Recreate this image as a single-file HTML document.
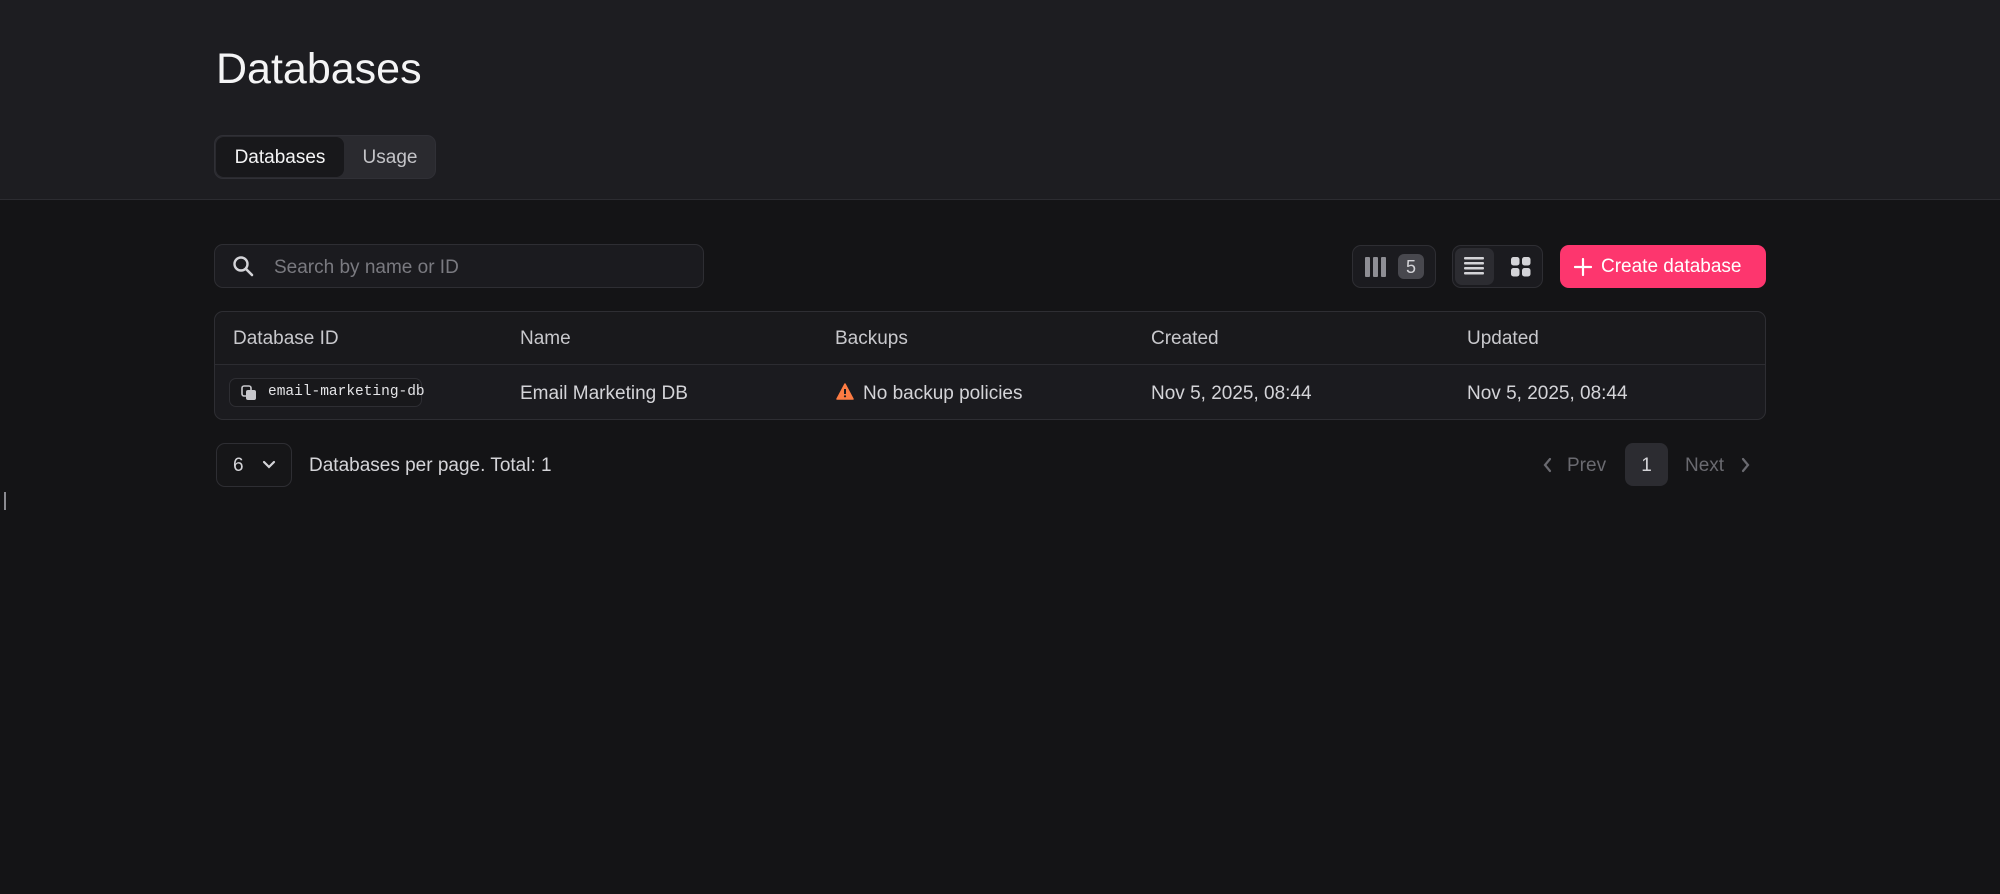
<!DOCTYPE html>
<html><head><style>
*{box-sizing:border-box;margin:0;padding:0}
body{width:2000px;height:894px;background:#141416;font-family:"Liberation Sans",sans-serif;color:#e4e4e7;position:relative;overflow:hidden}
.hdr{position:absolute;left:0;top:0;width:2000px;height:200px;background:#1d1d21;border-bottom:1px solid #2c2c31}
.abs{position:absolute}
h1{position:absolute;left:216px;top:45px;font-size:43px;font-weight:400;color:#f4f4f5;letter-spacing:0}
.tabs{left:214px;top:135px;width:222px;height:44px;background:#2a2a2f;border-radius:9px;border:1px solid #303036}
.tab1{left:1px;top:1px;width:128px;height:40px;background:#18181b;border-radius:8px;color:#f4f4f5;font-size:19px;line-height:42px;text-align:center}
.tab2{left:130px;top:1px;width:90px;height:40px;color:#c4c4c8;font-size:19px;line-height:42px;text-align:center}
.box{border:1px solid #2e2e33;background:#1b1b1f;border-radius:9px}
.txt{font-size:19px;white-space:nowrap}
</style></head><body>
<div class="hdr"></div>
<h1>Databases</h1>
<div class="abs tabs"><div class="abs tab1">Databases</div><div class="abs tab2">Usage</div></div>

<div class="abs box" style="left:214px;top:244px;width:490px;height:44px"></div>
<svg class="abs" style="left:232px;top:255px" width="22" height="22" viewBox="0 0 22 22"><circle cx="9" cy="9" r="6.5" fill="none" stroke="#d4d4d8" stroke-width="2.4"/><path d="M14 14l6 6" stroke="#d4d4d8" stroke-width="2.6" stroke-linecap="round"/></svg>
<div class="abs txt" style="left:274px;top:257px;color:#7a7a80">Search by name or ID</div>

<div class="abs box" style="left:1352px;top:245px;width:84px;height:43px"></div>
<svg class="abs" style="left:1364px;top:257px" width="24" height="20"><rect x="1" y="0" width="5" height="20" rx="1" fill="#8e8e94"/><rect x="9" y="0" width="5" height="20" rx="1" fill="#8e8e94"/><rect x="17" y="0" width="5" height="20" rx="1" fill="#8e8e94"/></svg>
<div class="abs" style="left:1398px;top:254px;width:26px;height:25px;background:#48484e;border-radius:6px;color:#d4d4d8;font-size:18px;text-align:center;line-height:26px">5</div>

<div class="abs box" style="left:1452px;top:245px;width:91px;height:43px"></div>
<div class="abs" style="left:1455px;top:248px;width:39px;height:37px;background:#2c2c31;border-radius:7px"></div>
<svg class="abs" style="left:1464px;top:256px" width="20" height="20"><g fill="#d4d4d8"><rect y="1" width="20" height="2.5" rx="1"/><rect y="6" width="20" height="2.5" rx="1"/><rect y="11" width="20" height="2.5" rx="1"/><rect y="16" width="20" height="2.5" rx="1"/></g></svg>
<svg class="abs" style="left:1511px;top:257px" width="20" height="20"><g fill="#d4d4d8"><rect width="8.5" height="8.5" rx="2.5"/><rect x="11" width="8.5" height="8.5" rx="2.5"/><rect y="11" width="8.5" height="8.5" rx="2.5"/><rect x="11" y="11" width="8.5" height="8.5" rx="2.5"/></g></svg>

<div class="abs" style="left:1560px;top:245px;width:206px;height:43px;background:#fd366e;border-radius:9px"></div>
<svg class="abs" style="left:1574px;top:258px" width="18" height="18"><path d="M9 1v16M1 9h16" stroke="#fff" stroke-width="2.2" stroke-linecap="round"/></svg>
<div class="abs txt" style="left:1601px;top:256px;color:#fff">Create database</div>

<div class="abs box" style="left:214px;top:311px;width:1552px;height:109px;background:#1b1b1f"></div>
<div class="abs" style="left:215px;top:312px;width:1550px;height:53px;background:#19191c;border-radius:9px 9px 0 0;border-bottom:1px solid #2c2c31"></div>
<div class="abs txt" style="left:233px;top:328px;color:#c8c8cc">Database ID</div>
<div class="abs txt" style="left:520px;top:328px;color:#c8c8cc">Name</div>
<div class="abs txt" style="left:835px;top:328px;color:#c8c8cc">Backups</div>
<div class="abs txt" style="left:1151px;top:328px;color:#c8c8cc">Created</div>
<div class="abs txt" style="left:1467px;top:328px;color:#c8c8cc">Updated</div>

<div class="abs" style="left:229px;top:378px;width:193px;height:29px;border:1px solid #2e2e33;border-radius:7px;background:#18181b"></div>
<svg class="abs" style="left:241px;top:385px" width="16" height="16"><rect x="1" y="1" width="9" height="10" rx="2" fill="none" stroke="#c8c8cc" stroke-width="1.6"/><rect x="5" y="5" width="10" height="10" rx="2" fill="#c8c8cc"/></svg>
<div class="abs" style="left:268px;top:384px;font-family:'Liberation Mono',monospace;font-size:14.5px;color:#e4e4e7">email-marketing-db</div>
<div class="abs txt" style="left:520px;top:383px;color:#d4d4d8">Email Marketing DB</div>
<svg class="abs" style="left:836px;top:383px" width="18" height="17"><path d="M9 1L17 16H1Z" fill="#fe7c43" stroke="#fe7c43" stroke-linejoin="round" stroke-width="1.5"/><path d="M9 6v5" stroke="#1b1b1f" stroke-width="2"/><circle cx="9" cy="13.3" r="1.1" fill="#1b1b1f"/></svg>
<div class="abs txt" style="left:863px;top:383px;color:#d4d4d8">No backup policies</div>
<div class="abs txt" style="left:1151px;top:383px;color:#d4d4d8">Nov 5, 2025, 08:44</div>
<div class="abs txt" style="left:1467px;top:383px;color:#d4d4d8">Nov 5, 2025, 08:44</div>

<div class="abs box" style="left:216px;top:443px;width:76px;height:44px;background:#161618"></div>
<div class="abs txt" style="left:233px;top:455px;color:#d4d4d8">6</div>
<svg class="abs" style="left:262px;top:460px" width="14" height="10"><path d="M2 2l5 5 5-5" fill="none" stroke="#d4d4d8" stroke-width="2.2" stroke-linecap="round"/></svg>
<div class="abs txt" style="left:309px;top:455px;color:#d4d4d8">Databases per page. Total: 1</div>

<svg class="abs" style="left:1543px;top:457px" width="10" height="16"><path d="M7 2L2 8l5 6" fill="none" stroke="#6a6a70" stroke-width="2.2" stroke-linecap="round"/></svg>
<div class="abs txt" style="left:1567px;top:455px;color:#6a6a70">Prev</div>
<div class="abs" style="left:1625px;top:443px;width:43px;height:43px;background:#2c2c31;border-radius:8px;color:#d4d4d8;font-size:19px;text-align:center;line-height:45px">1</div>
<div class="abs txt" style="left:1685px;top:455px;color:#6a6a70">Next</div>
<svg class="abs" style="left:1740px;top:457px" width="10" height="16"><path d="M3 2l5 6-5 6" fill="none" stroke="#6a6a70" stroke-width="2.2" stroke-linecap="round"/></svg>

<div class="abs" style="left:4px;top:492px;width:2px;height:18px;background:#8a8a90"></div>
</body></html>
